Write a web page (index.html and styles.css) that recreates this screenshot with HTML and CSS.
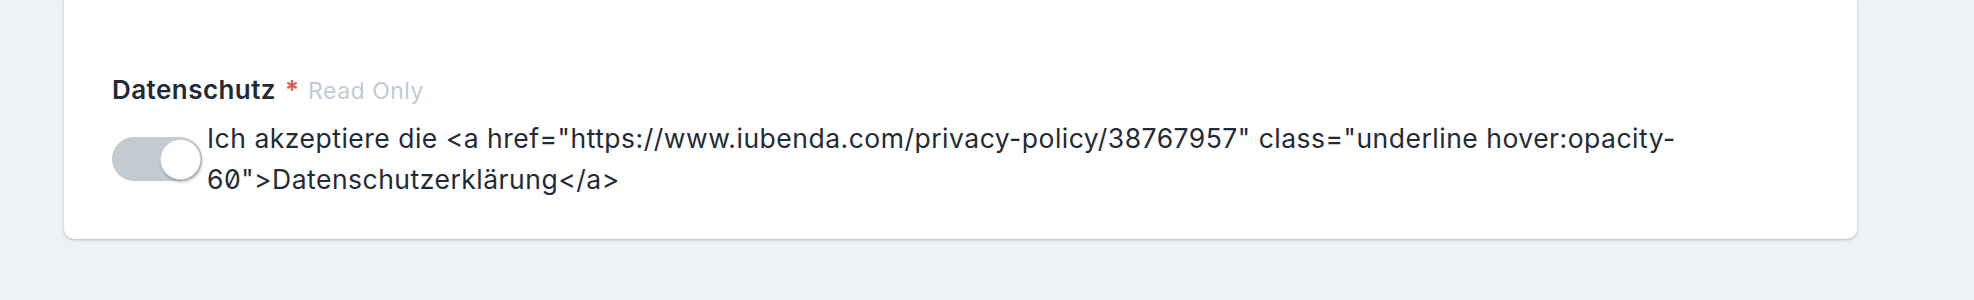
FILE: index.html
```html
<!DOCTYPE html>
<html lang="de">
<head>
<meta charset="utf-8">
<title>Datenschutz</title>
<link rel="stylesheet" href="styles.css">
</head>
<body>
<div class="page">
  <div class="card">
    <div class="field">
      <div class="label">
        <span class="label-text">Datenschutz</span>
        <span class="required">*</span>
        <span class="readonly">Read Only</span>
      </div>
      <div class="row">
        <div class="toggle" role="switch" aria-checked="true" aria-readonly="true">
          <span class="knob"></span>
        </div>
        <p class="consent">Ich akzeptiere die &lt;a href="https://www.iubenda.com/privacy-policy/38767957" class="underline hover:opacity-60"&gt;Datenschutzerklärung&lt;/a&gt;</p>
      </div>
    </div>
  </div>
</div>
</body>
</html>
```

FILE: styles.css
```css
* { box-sizing: border-box; }

html, body {
  margin: 0;
  padding: 0;
  background: #eef1f6;
  font-family: Inter, "Noto Sans", "Liberation Sans", sans-serif;
  color: #1f2b36;
}

.page {
  padding: 0 117px 0 64px;
  height: 300px;
}

.card {
  background: #ffffff;
  border-radius: 0 0 10px 10px;
  box-shadow: 0 1px 3px rgba(60, 70, 100, 0.22), 0 1px 2px rgba(60, 70, 100, 0.12);
  padding: 70px 48px 39px 48px;
}

.field {
  display: flex;
  flex-direction: column;
  gap: 7px;
}

.label {
  display: flex;
  align-items: baseline;
  gap: 9px;
  line-height: 40px;
}

.label-text {
  font-size: 26px;
  font-weight: 600;
  letter-spacing: 0.45px;
  color: #1f2b36;
}

.required {
  font-size: 26px;
  font-weight: 600;
  color: #e0564b;
}

.readonly {
  font-size: 23px;
  letter-spacing: 0.5px;
  color: #c3cad4;
}

.row {
  display: flex;
  align-items: center;
  gap: 5px;
}

.toggle {
  flex: 0 0 auto;
  width: 90px;
  height: 44px;
  border-radius: 22px;
  background: #c4cad2;
  display: flex;
  align-items: center;
  justify-content: flex-end;
  padding: 0 1px;
}

.knob {
  width: 41px;
  height: 41px;
  border-radius: 50%;
  background: #ffffff;
  border: 1px solid #d3d7dd;
  box-shadow: 1px 2px 3px rgba(0, 0, 0, 0.25);
}

.consent {
  margin: 0;
  font-size: 26.5px;
  line-height: 41px;
  letter-spacing: 0.5px;
  font-feature-settings: "zero" 1;
  color: #1f2b36;
}
```
